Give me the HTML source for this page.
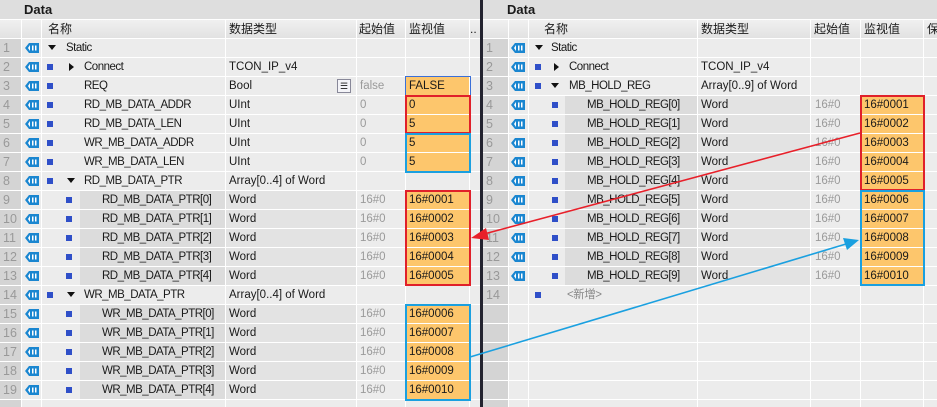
<!DOCTYPE html>
<html><head><meta charset="utf-8"><style>
*{margin:0;padding:0;box-sizing:border-box}
body{width:937px;height:407px;overflow:hidden;background:#fff;font-family:"Liberation Sans","Noto Sans CJK SC",sans-serif;font-size:11.5px;color:#1a1a1a;position:relative}
.p{position:absolute;top:0;height:407px;background:#fff;overflow:hidden}
.t{position:absolute;left:0;top:0;height:19px;width:100%;background:#dedede;font-weight:bold;font-size:13px;line-height:19px}
.r{position:absolute;left:0;height:18px;width:100%}
.c{position:absolute;top:0;height:18px;line-height:18px;white-space:nowrap;overflow:hidden;background:#ececec}
.h .c{background:linear-gradient(#f0f0f0,#e2e2e2);font-size:12px}
.n{color:#999;background:#d4d4d4;padding-left:3px;font-size:12.5px}
.g{color:#9a9a9a}
.d{background:#dcdcdc}
.e{background:#e3e3e3}
.m{background:#fdc66c;padding-left:3px}
.ic{position:absolute;top:4px;width:14px;height:10px}
.b{position:absolute;top:6px;width:6px;height:6px;background:#2f4fc8}
.tri{position:absolute;top:6px;width:0;height:0;border-left:4px solid transparent;border-right:4px solid transparent;border-top:5px solid #111}
.tr{position:absolute;top:5px;width:0;height:0;border-top:4px solid transparent;border-bottom:4px solid transparent;border-left:5px solid #111}
.x{position:absolute;letter-spacing:-0.5px}
.bx{position:absolute;border:2px solid}
</style></head><body>
<svg width="0" height="0" style="position:absolute"><defs><symbol id="tg" viewBox="0 0 14 10"><path d="M4 0H14V10H4L0 5Z" fill="#1a86d0"/><path d="M3 5 L5 2 L5 8Z" fill="#fff"/><rect x="7" y="2.5" width="1.5" height="5" fill="#fff"/><rect x="10" y="2.5" width="1.5" height="5" fill="#fff"/></symbol></defs></svg>

<div class="p" style="left:0;width:480px">
<div class="t"><span style="position:absolute;left:24px">Data</span></div>
<div class="r h" style="top:20px"><span class="c" style="left:0;width:21px"></span><span class="c" style="left:22px;width:19px"></span><span class="c" style="left:42px;width:183px;padding-left:6px">名称</span><span class="c" style="left:226px;width:130px;padding-left:3px">数据类型</span><span class="c" style="left:357px;width:48px;padding-left:2px">起始值</span><span class="c" style="left:406px;width:63px;padding-left:3px">监视值</span><span class="c" style="left:470px;width:10px">..</span></div>
<div id="L"></div>
</div>

<div class="p" style="left:483px;width:454px">
<div class="t"><span style="position:absolute;left:24px">Data</span></div>
<div class="r h" style="top:20px"><span class="c" style="left:0;width:25px"></span><span class="c" style="left:26px;width:19px"></span><span class="c" style="left:46px;width:168px;padding-left:15px">名称</span><span class="c" style="left:215px;width:112px;padding-left:3px">数据类型</span><span class="c" style="left:328px;width:49px;padding-left:3px">起始值</span><span class="c" style="left:378px;width:62px;padding-left:3px">监视值</span><span class="c" style="left:441px;width:20px;padding-left:3px">保</span></div>
<div id="R"></div>
</div>
<div style="position:absolute;left:480px;top:0;width:3px;height:407px;background:#23232f"></div>

<script>
function tg(x){return '<svg class="ic" style="left:'+x+'px"><use href="#tg"/></svg>'}
var L=[
[0,'Static','','',''],
[1,'Connect','TCON_IP_v4','','',1],
[1,'REQ','Bool','false','FALSE'],
[1,'RD_MB_DATA_ADDR','UInt','0','0'],
[1,'RD_MB_DATA_LEN','UInt','0','5'],
[1,'WR_MB_DATA_ADDR','UInt','0','5'],
[1,'WR_MB_DATA_LEN','UInt','0','5'],
[1,'RD_MB_DATA_PTR','Array[0..4] of Word','','',2]];
for(var i=0;i<5;i++)L.push([2,'RD_MB_DATA_PTR['+i+']','Word','16#0','16#000'+(i+1)]);
L.push([1,'WR_MB_DATA_PTR','Array[0..4] of Word','','',2]);
for(var i=0;i<5;i++)L.push([2,'WR_MB_DATA_PTR['+i+']','Word','16#0',i<4?'16#000'+(i+6):'16#0010']);
var h='';
for(var i=0;i<20;i++){var y=39+i*19;var a=L[i];
h+='<div class="r" style="top:'+y+'px">';
h+='<span class="c n" style="left:0;width:21px">'+(a?i+1:'')+'</span>';
h+='<span class="c" style="left:22px;width:19px">'+(a?tg(3):'')+'</span>';
if(!a){h+='<span class="c" style="left:42px;width:183px"></span><span class="c" style="left:226px;width:130px"></span><span class="c" style="left:357px;width:48px"></span><span class="c" style="left:406px;width:63px"></span><span class="c" style="left:470px;width:10px"></span></div>';continue}
var lv=a[0],nm='';
if(lv==0)nm='<span class="tri" style="left:6px"></span><span class="x" style="left:24px">'+a[1]+'</span>';
else if(lv==1){nm='<span class="b" style="left:5px"></span>';if(a[5]==1)nm+='<span class="tr" style="left:27px"></span>';if(a[5]==2)nm+='<span class="tri" style="left:25px"></span>';nm+='<span class="x" style="left:42px">'+a[1]+'</span>'}
else nm='<span class="b" style="left:24px"></span><span class="c d" style="left:38px;width:146px"></span><span class="x" style="left:60px">'+a[1]+'</span>';
h+='<span class="c" style="left:42px;width:183px">'+nm+'</span>';
h+='<span class="c'+(lv==2?' e':'')+'" style="left:226px;width:130px;padding-left:3px">'+a[2]+(a[1]=='REQ'?'<span style="position:absolute;left:111px;top:2px;width:14px;height:14px;border:1px solid #889;background:#f4f4f8;font-size:9px;line-height:12px;text-align:center">&#9776;</span>':'')+'</span>';
h+='<span class="c g" style="left:357px;width:48px;padding-left:3px">'+a[3]+'</span>';
h+='<span class="c'+(a[4]?' m':'')+'" style="left:406px;width:63px">'+a[4]+'</span>';
h+='<span class="c" style="left:470px;width:10px"></span></div>'}
document.getElementById('L').innerHTML=h;

var R=[[0,'Static','','',''],[1,'Connect','TCON_IP_v4','','',1],[1,'MB_HOLD_REG','Array[0..9] of Word','','',2]];
for(var i=0;i<10;i++)R.push([2,'MB_HOLD_REG['+i+']','Word','16#0',i<9?'16#000'+(i+1):'16#0010']);
R.push([3,'&lt;新增&gt;','','','']);
h='';
for(var i=0;i<20;i++){var y=39+i*19;var a=R[i];
h+='<div class="r" style="top:'+y+'px">';
h+='<span class="c n" style="left:0;width:25px">'+(a?i+1:'')+'</span>';
h+='<span class="c" style="left:26px;width:19px">'+(a&&a[0]<3?tg(2):'')+'</span>';
var nm='';
if(a){var lv=a[0];
if(lv==0)nm='<span class="tri" style="left:6px"></span><span class="x" style="left:22px">'+a[1]+'</span>';
else if(lv==1){nm='<span class="b" style="left:6px"></span>';if(a[5]==1)nm+='<span class="tr" style="left:25px"></span>';if(a[5]==2)nm+='<span class="tri" style="left:22px"></span>';nm+='<span class="x" style="left:40px">'+a[1]+'</span>'}
else if(lv==2)nm='<span class="b" style="left:23px"></span><span class="c d" style="left:36px;width:132px"></span><span class="x" style="left:58px">'+a[1]+'</span>';
else nm='<span class="b" style="left:6px"></span><span class="x" style="left:38px;color:#888">'+a[1]+'</span>';}
h+='<span class="c" style="left:46px;width:168px">'+nm+'</span>';
h+='<span class="c'+(a&&a[0]==2?' e':'')+'" style="left:215px;width:112px;padding-left:3px">'+(a?a[2]:'')+'</span>';
h+='<span class="c g" style="left:328px;width:49px;padding-left:4px">'+(a?a[3]:'')+'</span>';
h+='<span class="c'+(a&&a[4]?' m':'')+'" style="left:378px;width:62px">'+(a?a[4]:'')+'</span>';
h+='<span class="c" style="left:441px;width:20px"></span></div>'}
document.getElementById('R').innerHTML=h;
</script>

<div class="bx" style="left:405px;top:76px;width:66px;height:20px;border:1px solid #3a6fd8"></div>
<div class="bx" style="left:405px;top:95px;width:66px;height:39px;border-color:#e0202a"></div>
<div class="bx" style="left:405px;top:133px;width:66px;height:40px;border-color:#1aa0e0"></div>
<div class="bx" style="left:405px;top:190px;width:66px;height:96px;border-color:#e0202a"></div>
<div class="bx" style="left:405px;top:304px;width:66px;height:97px;border-color:#1aa0e0"></div>
<div class="bx" style="left:860px;top:95px;width:65px;height:96px;border-color:#e0202a"></div>
<div class="bx" style="left:860px;top:190px;width:65px;height:96px;border-color:#1aa0e0"></div>

<svg style="position:absolute;left:0;top:0" width="937" height="407">
<line x1="860" y1="133" x2="484" y2="234" stroke="#e8202a" stroke-width="1.6"/>
<path d="M471 238 L486 228 L489 240Z" fill="#e8202a"/>
<line x1="470" y1="357" x2="846" y2="244" stroke="#1aa0e0" stroke-width="1.6"/>
<path d="M859 240 L843 238 L847 250Z" fill="#1aa0e0"/>
</svg>
</body></html>
